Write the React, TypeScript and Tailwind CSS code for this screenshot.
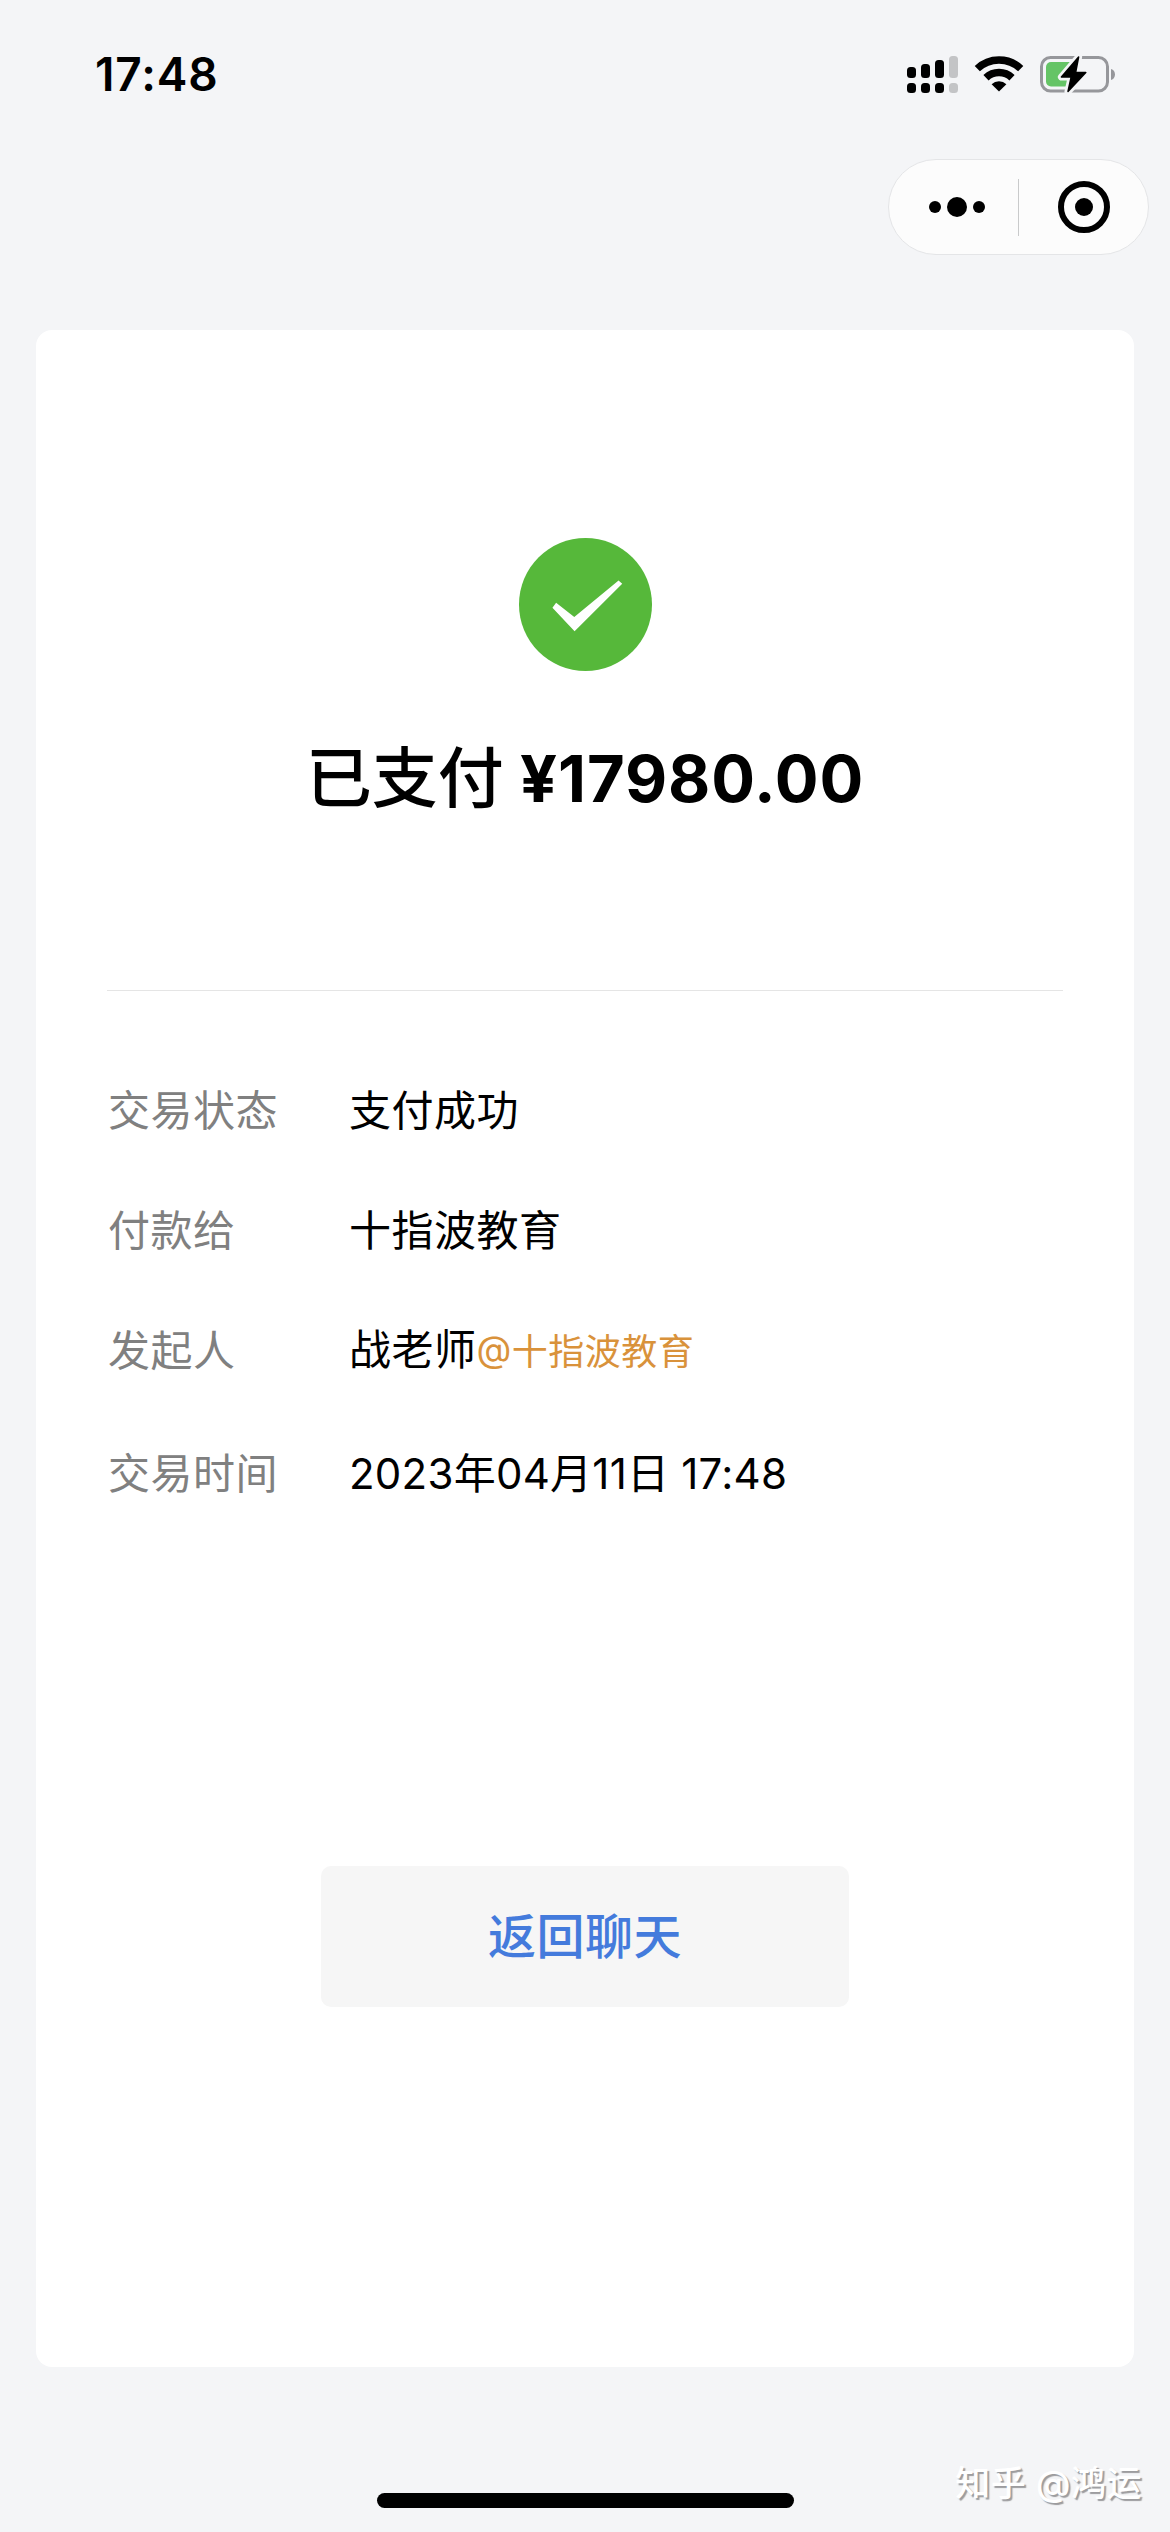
import type { ReactNode } from "react";

function CellularIcon() {
  return (
    <svg className="h-[38px] w-[52px]" viewBox="0 0 52 38">
      <rect x="0" y="11" width="9" height="11" rx="3.5" />
      <rect x="14" y="8" width="9" height="14" rx="3.5" />
      <rect x="28" y="4" width="9" height="18" rx="3.5" />
      <rect x="42" y="0" width="9" height="22" rx="3.5" fill="#c3c4c6" />
      <rect x="0" y="27" width="9" height="10" rx="3.5" />
      <rect x="14" y="27" width="9" height="10" rx="3.5" />
      <rect x="28" y="27" width="9" height="10" rx="3.5" />
      <rect x="42" y="27" width="9" height="10" rx="3.5" fill="#c3c4c6" />
    </svg>
  );
}

function WifiIcon() {
  return (
    <svg className="h-[38px] w-[50px]" viewBox="0 0 50 38">
      <g fill="none" stroke="#000" strokeWidth="7.5">
        <path d="M3.3 12.6A31.5 31.5 0 0 1 46.7 12.6" />
        <path d="M12 21.8A18.7 18.7 0 0 1 38 21.8" />
      </g>
      <path d="M25 35.5 17.6 28.2A10.6 10.6 0 0 1 32.4 28.2Z" />
    </svg>
  );
}

function BatteryIcon() {
  const bolt = "M38.6 1 21.4 21h9.8L28 35.5 45.8 16.6H35.6Z";
  return (
    <svg className="h-[38px] w-[76px]" viewBox="0 0 76 38">
      <rect x="1.5" y="1.5" width="66" height="33.5" rx="9" fill="none" stroke="#96979b" strokeWidth="3" />
      <path d="M71 13v11c2.6-.8 4-3 4-5.5s-1.4-4.700-4-5.5Z" fill="#96979b" />
      <rect x="6" y="6" width="29" height="24.5" rx="5" fill="#65c466" />
      <path d={bolt} stroke="#f4f5f7" strokeWidth="7" strokeLinejoin="round" fill="#f4f5f7" />
      <path d={bolt} stroke="#000" strokeWidth="1.5" strokeLinejoin="round" />
    </svg>
  );
}

function StatusBar() {
  return (
    <div className="flex h-[159px] items-start justify-between pr-[54px] pl-[95px]">
      <div className="mt-[47px] text-[46px] leading-[54px] font-semibold tracking-[0.9px]">17:48</div>
      <div className="mt-[56px] flex">
        <CellularIcon />
        <div className="ml-[15px]">
          <WifiIcon />
        </div>
        <div className="ml-[16px]">
          <BatteryIcon />
        </div>
      </div>
    </div>
  );
}

function Capsule() {
  return (
    <div className="mr-[21px] flex h-[96px] w-[261px] items-center self-end rounded-full border border-[#e4e5e7] bg-[#fcfcfc]">
      <div className="flex w-[129px] items-center gap-[6px] pl-[39.5px]">
        <span className="size-[12px] rounded-full bg-black" />
        <span className="size-[20px] rounded-full bg-black" />
        <span className="size-[12px] rounded-full bg-black" />
      </div>
      <div className="h-[57px] w-px bg-[#c9cacb]" />
      <div className="ml-[39px] flex size-[52px] items-center justify-center rounded-full border-[6px] border-black">
        <span className="size-[18px] rounded-full bg-black" />
      </div>
    </div>
  );
}

function Row({ label, children }: { label: string; children: ReactNode }) {
  return (
    <div className="flex h-[60px] items-center text-[42px] leading-[60px] tracking-[0.5px]">
      <div className="w-[242px] pl-px text-[#808080]">{label}</div>
      <div className="whitespace-nowrap">{children}</div>
    </div>
  );
}

export default function App() {
  return (
    <div className="flex h-[2532px] w-[1170px] flex-col overflow-hidden bg-[#f4f5f7] font-['Inter','Noto_Sans_CJK_SC',sans-serif] text-black">
      <StatusBar />
      <Capsule />
      <main className="mx-[36px] mt-[75px] flex h-[2037px] flex-col items-center rounded-[16px] bg-white">
        <div className="mt-[208px] flex size-[133px] items-center justify-center rounded-full bg-[#56b83a]">
          <svg className="size-[133px]" viewBox="0 0 134 134" fill="#fff">
            <path d="M33.7 70.3 37.4 65.3 55.7 79.7 100.3 42.7 104 46 56 94Z" />
          </svg>
        </div>
        <h1 className="mt-[59px] h-[96px] text-[65px] leading-[96px] font-bold tracking-[0.9px] whitespace-nowrap">
          <span className="text-[66px] font-medium tracking-normal">已支付</span> ¥17980.00
        </h1>
        <div className="mt-[164px] h-px w-[956px] bg-[#e5e5e5]" />
        <section className="mt-[90px] flex w-[956px] flex-col gap-[60px]">
          <Row label="交易状态">支付成功</Row>
          <Row label="付款给">十指波教育</Row>
          <Row label="发起人">
            战老师
            <span className="text-[36px] text-[#d9923b]">
              <span className="relative -top-[3px]">@</span>十指波教育
            </span>
          </Row>
          <div className="mt-[3px]">
            <Row label="交易时间">
              <span className="tracking-[0.25px]">2023年04月11日 17:48</span>
            </Row>
          </div>
        </section>
        <button className="mt-[362px] h-[141px] w-[528px] rounded-[10px] bg-[#f6f6f6] text-[48px] font-medium tracking-[0.5px] text-[#447bdc]">
          返回聊天
        </button>
      </main>
      <footer className="relative flex flex-1 justify-center">
        <div className="mt-[126px] h-[15px] w-[417px] rounded-full bg-black" />
        <div className="absolute top-[91px] right-[28px] text-[35px] leading-[50px] font-medium tracking-[0.5px] whitespace-nowrap text-white [text-shadow:2px_2px_1px_#9c9c9e]">
          知乎 @鸿运
        </div>
      </footer>
    </div>
  );
}
